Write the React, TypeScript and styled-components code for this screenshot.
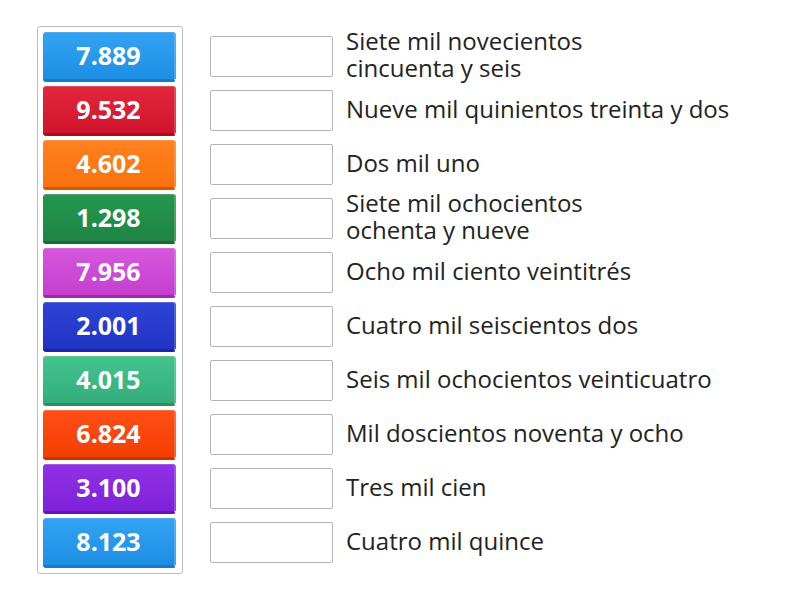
import React from "react";
import styled, { createGlobalStyle } from "styled-components";

const Global = createGlobalStyle`
  html, body { margin: 0; padding: 0; background: #fff; }
  body { font-family: "Open Sans", "Liberation Sans", sans-serif; }
`;

const Page = styled.div`
  display: flex;
  align-items: flex-start;
  padding: 26px 0 0 37px;
  width: 800px;
  height: 600px;
  box-sizing: border-box;
`;

const TileColumn = styled.div`
  display: flex;
  flex-direction: column;
  gap: 4px;
  padding: 5px 6px 5px 5px;
  border: 1px solid #bdbdbd;
  border-radius: 3px;
`;

const Tile = styled.div<{ $top: string; $bottom: string; $edge: string }>`
  width: 133px;
  height: 50px;
  box-sizing: border-box;
  border-radius: 3px;
  background: linear-gradient(${(p) => p.$top}, ${(p) => p.$bottom});
  border-top: 1px solid rgba(255, 255, 255, 0.25);
  border-right: 2px solid rgba(255, 255, 255, 0.18);
  border-bottom: 3px solid ${(p) => p.$edge};
  display: flex;
  align-items: center;
  justify-content: center;
  color: #fff;
  font-weight: 700;
  font-size: 25px;
  padding-bottom: 3px;
`;

const Rows = styled.div`
  display: flex;
  flex-direction: column;
  gap: 4px;
  padding-top: 6px;
  margin-left: 27px;
`;

const Row = styled.div`
  height: 50px;
  display: flex;
  align-items: center;
  gap: 13px;
`;

const Slot = styled.div`
  width: 123px;
  height: 41px;
  box-sizing: border-box;
  border: 1px solid #b4b4b4;
  border-radius: 2px;
  background: #fff;
  margin-top: -1px;
`;

const Label = styled.div`
  font-size: 24px;
  line-height: 27px;
  color: #222;
  margin-top: -6px;
`;

const tiles = [
  { n: "7.889", top: "#34a2f2", bottom: "#1d8fe3", edge: "#157ccb" },
  { n: "9.532", top: "#e1263d", bottom: "#d0142c", edge: "#a80d20" },
  { n: "4.602", top: "#ff811f", bottom: "#fa720c", edge: "#d35c00" },
  { n: "1.298", top: "#23964f", bottom: "#1f8544", edge: "#176a35" },
  { n: "7.956", top: "#d557dc", bottom: "#c53ed0", edge: "#a02aab" },
  { n: "2.001", top: "#2d43d8", bottom: "#2233c2", edge: "#1a279e" },
  { n: "4.015", top: "#42c38f", bottom: "#35ad7b", edge: "#2a8f64" },
  { n: "6.824", top: "#ff4f18", bottom: "#f23e00", edge: "#c73300" },
  { n: "3.100", top: "#9131e6", bottom: "#7e21d8", edge: "#6316b3" },
  { n: "8.123", top: "#34a2f2", bottom: "#1d8fe3", edge: "#157ccb" },
];

const labels: string[][] = [
  ["Siete mil novecientos", "cincuenta y seis"],
  ["Nueve mil quinientos treinta y dos"],
  ["Dos mil uno"],
  ["Siete mil ochocientos", "ochenta y nueve"],
  ["Ocho mil ciento veintitrés"],
  ["Cuatro mil seiscientos dos"],
  ["Seis mil ochocientos veinticuatro"],
  ["Mil doscientos noventa y ocho"],
  ["Tres mil cien"],
  ["Cuatro mil quince"],
];

export default function App() {
  return (
    <>
      <Global />
      <Page>
        <TileColumn>
          {tiles.map((t) => (
            <Tile key={t.n} $top={t.top} $bottom={t.bottom} $edge={t.edge}>
              {t.n}
            </Tile>
          ))}
        </TileColumn>
        <Rows>
          {labels.map((l, i) => (
            <Row key={i}>
              <Slot />
              <Label>
                {l.map((line, j) => (
                  <React.Fragment key={j}>
                    {j > 0 && <br />}
                    {line}
                  </React.Fragment>
                ))}
              </Label>
            </Row>
          ))}
        </Rows>
      </Page>
    </>
  );
}
